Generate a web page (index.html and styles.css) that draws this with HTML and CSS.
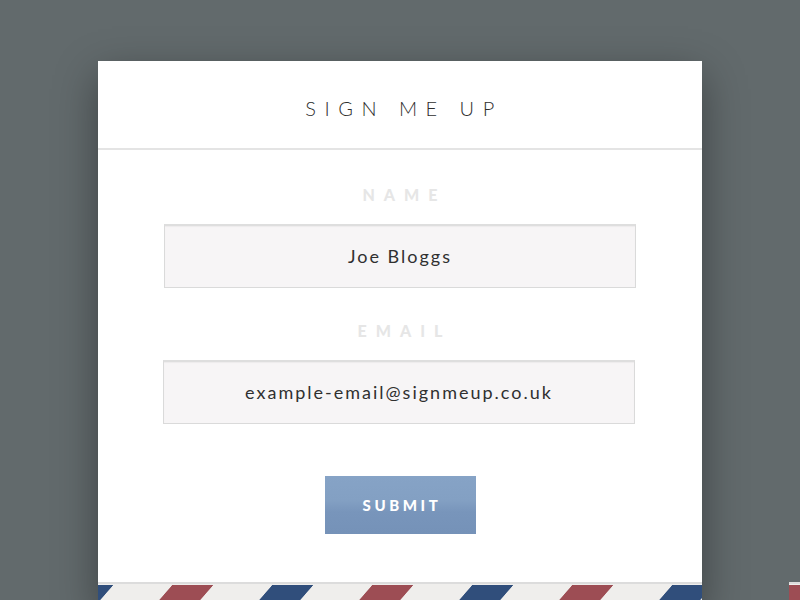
FILE: index.html
```html
<!DOCTYPE html>
<html lang="en">
<head>
    <meta charset="UTF-8">
    <meta name="viewport" content="width=device-width, initial-scale=1.0">
    <title>Sign Me Up</title>
    <link rel="stylesheet" href="styles.css">
</head>
<body>
    <div class="desk">
        <div class="card">
            <div class="card-head">
                <h1>Sign me up</h1>
            </div>

            <form class="signup">
                <label for="name" class="field-label">Name</label>
                <input type="text" id="name" class="field" value="Joe Bloggs">

                <label for="email" class="field-label email-label">Email</label>
                <input type="email" id="email" class="field email-field" value="example-email@signmeup.co.uk">

                <button type="button" class="submit">Submit</button>
            </form>

            <!-- airmail stripes -->
            <div class="airmail">
                <svg width="604" height="20">
                    <defs>
                        <pattern id="stripes-a" x="-25.7" y="0" width="200" height="20" patternUnits="userSpaceOnUse" patternTransform="skewX(-41)">
                            <rect x="0" y="0" width="41" height="20" fill="#304e7b"/>
                            <rect x="100" y="0" width="41" height="20" fill="#9d4d54"/>
                        </pattern>
                    </defs>
                    <rect width="604" height="20" fill="url(#stripes-a)"/>
                </svg>
            </div>
        </div>

        <div class="card card-next">
            <div class="airmail">
                <svg width="604" height="20">
                    <defs>
                        <pattern id="stripes-b" x="-116.7" y="0" width="200" height="20" patternUnits="userSpaceOnUse" patternTransform="skewX(-41)">
                            <rect x="0" y="0" width="41" height="20" fill="#304e7b"/>
                            <rect x="100" y="0" width="41" height="20" fill="#9d4d54"/>
                        </pattern>
                    </defs>
                    <rect width="604" height="20" fill="url(#stripes-b)"/>
                </svg>
            </div>
        </div>
    </div>
</body>
</html>
```

FILE: styles.css
```css
html, body {
    margin: 0;
    padding: 0;
}
body {
    width: 800px;
    height: 600px;
    overflow: hidden;
    background-color: #626a6c;
    font-family: Lato, "Open Sans", sans-serif;
}
.desk {
    display: flex;
    align-items: flex-start;
    gap: 87px;
    padding: 61px 0 0 98px;
}
.card {
    flex: none;
    width: 604px;
    background: #ffffff;
    box-shadow: 0 14px 40px rgba(0, 0, 0, 0.38);
}
.card-next {
    margin-top: 521px;
    box-shadow: none;
}
.card-head {
    height: 87px;
    border-bottom: 2px solid #e4e4e4;
    text-align: center;
}
h1 {
    margin: 0;
    line-height: 94px;
    font-size: 20px;
    font-weight: 300;
    color: #2e2e2e;
    text-transform: uppercase;
    letter-spacing: 8.5px;
    padding-left: 8px;
}
.signup {
    display: flex;
    flex-direction: column;
    align-items: center;
    padding: 29px 66px 48px;
}
.field-label {
    display: block;
    height: 31px;
    line-height: 31px;
    font-size: 16px;
    font-weight: 900;
    color: #e6e6e6;
    text-transform: uppercase;
    letter-spacing: 9px;
    padding-left: 9px;
    margin-bottom: 14px;
}
.email-label {
    margin-top: 27px;
}
.field {
    box-sizing: border-box;
    width: 472px;
    height: 64px;
    margin: 0;
    padding: 0 10px 2px;
    background: #f7f5f6;
    border: 1px solid #dadada;
    border-top: 2px solid #dedede;
    border-radius: 0;
    box-shadow: inset 0 1px 1px rgba(0, 0, 0, 0.04);
    font-family: Lato, "Open Sans", sans-serif;
    font-size: 18px;
    color: #303030;
    letter-spacing: 2px;
    text-align: center;
    outline: none;
}
.email-field {
    position: relative;
    left: -1px;
}
.submit {
    margin-top: 52px;
    width: 151px;
    height: 58px;
    border: none;
    border-radius: 0;
    background: linear-gradient(#86a3c6 0%, #83a0c3 42%, #7895bb 62%, #7592b8 100%);
    color: #ffffff;
    font-family: Lato, "Open Sans", sans-serif;
    font-size: 15px;
    font-weight: 900;
    text-transform: uppercase;
    letter-spacing: 3.6px;
    padding: 0 0 0 4px;
}
.airmail {
    height: 20px;
    border-top: 2px solid #dcdcdc;
    padding-top: 1px;
    background: #efeeec;
}
.airmail svg {
    display: block;
}
```
